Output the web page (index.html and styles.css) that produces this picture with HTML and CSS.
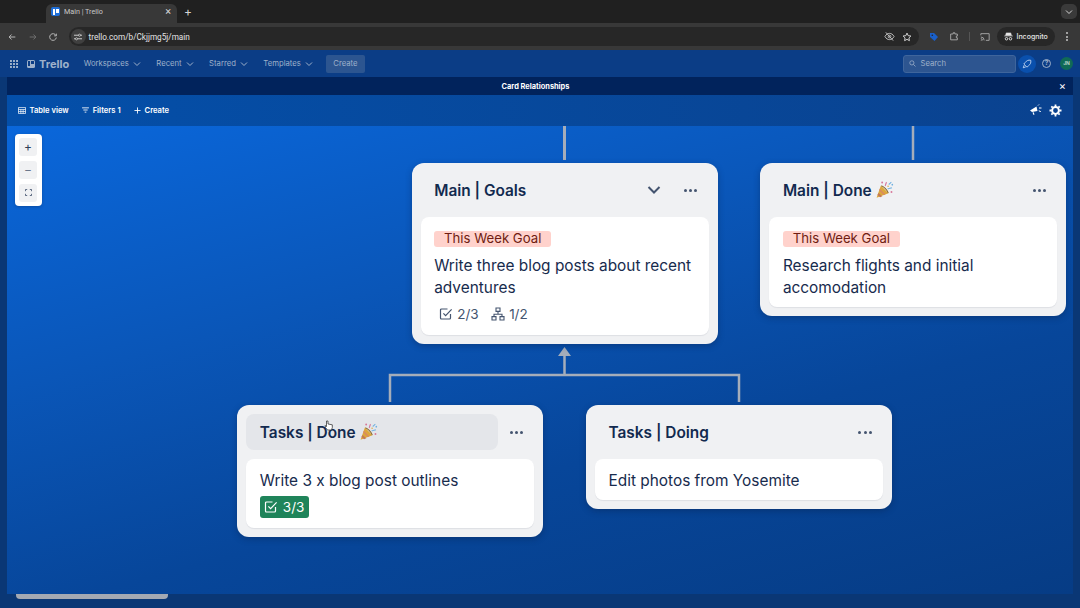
FILE: index.html
```html
<!DOCTYPE html>
<html lang="en">
<head>
    <meta charset="UTF-8">
    <title>Main | Trello</title>
    <link rel="stylesheet" href="styles.css">
</head>
<body>
    <svg class="defs" width="0" height="0">
        <symbol id="popper" viewBox="0 0 18 18">
            <path d="M1.5 16.8 5.6 5.2l7.2 7.3z" fill="#dca83c"/>
            <path d="M3.2 12.2 7 15.4l-2.2.9-2.5-2z" fill="#c47a55"/>
            <path d="M4.6 8.2l5.3 5.5-1.5.6-4.6-4.6z" fill="#d98a62"/>
            <path d="M6 5.5c2 .5 5.6 4 6.6 6.8" fill="none" stroke="#8a6a30" stroke-width="1"/>
            <path d="M9.6 5.5c.8-1.2.4-2.4 1.4-3.400" fill="none" stroke="#d8779a" stroke-width="1.1"/>
            <path d="M12 8.6c1.4-1 2.6-.6 4-1.300" fill="none" stroke="#6fb0e0" stroke-width="1.1"/>
            <path d="M13 4.200c1-.5 1.500-1.500 2.500-2" fill="none" stroke="#6fb0e0" stroke-width="1"/>
            <circle cx="6.800" cy="2.400" r=".9" fill="#d8779a"/>
            <circle cx="16.400" cy="4.400" r=".8" fill="#6fb0e0"/>
            <circle cx="15.600" cy="11.400" r=".9" fill="#d8779a"/>
            <circle cx="12.400" cy="6" r=".7" fill="#dca83c"/>
        </symbol>
        <symbol id="check" viewBox="0 0 14 14">
            <path d="M11.500 7v4a1 1 0 0 1-1 1h-8a1 1 0 0 1-1-1V3a1 1 0 0 1 1-1h6" fill="none" stroke="currentColor" stroke-width="1.2"/>
            <path d="M4.400 6.400 6.600 8.600 12.600 2.400" fill="none" stroke="currentColor" stroke-width="1.2"/>
        </symbol>
        <symbol id="tree" viewBox="0 0 14 14">
            <path d="M5 1h4v3.400H5zM1 9.600h4V13H1zM9 9.600h4V13H9zM7 4.400v2.800M3 9.600V7.200h8v2.400" fill="none" stroke="currentColor" stroke-width="1.1"/>
        </symbol>
        <symbol id="chev" viewBox="0 0 10 10">
            <path d="M2 3.500 5 6.500 8 3.500" fill="none" stroke="currentColor" stroke-width="1"/>
        </symbol>
    </svg>

    <div class="tabbar">
        <div class="tab">
            <span class="favicon"><i></i><i></i></span>
            <span class="tab-title">Main | Trello</span>
            <span class="tab-close">×</span>
        </div>
        <span class="tab-new">+</span>
        <span class="tab-menu"><svg width="10" height="10"><use href="#chev"/></svg></span>
    </div>

    <div class="toolbar">
        <svg class="nav-btn" width="10" height="10" viewBox="0 0 12 12"><path d="M10 6H2.500M5.500 3 2.500 6l3 3" fill="none" stroke="#b5b5b5" stroke-width="1.200"/></svg>
        <svg class="nav-btn" width="10" height="10" viewBox="0 0 12 12"><path d="M2 6h7.500M6.500 3l3 3-3 3" fill="none" stroke="#6e6e6e" stroke-width="1.200"/></svg>
        <svg class="nav-btn" width="10" height="10" viewBox="0 0 12 12"><path d="M9.600 4.200A4 4 0 1 0 10 6.600M10 2v2.600H7.400" fill="none" stroke="#b5b5b5" stroke-width="1.200"/></svg>
        <div class="omnibox">
            <span class="site-info"><svg width="8" height="8" viewBox="0 0 9 9"><path d="M0 2.500h5M7.500 2.500H9M0 6.500h1.500M4 6.500h5" stroke="#ddd" fill="none"/><circle cx="6.200" cy="2.500" r="1.200" fill="none" stroke="#ddd" stroke-width=".8"/><circle cx="2.800" cy="6.500" r="1.200" fill="none" stroke="#ddd" stroke-width=".8"/></svg></span>
            <span class="url">trello.com/b/Ckjjmg5j/main</span>
            <svg class="omni-right" width="11" height="11" viewBox="0 0 12 12"><path d="M1 6c1.400-2.400 3-3.400 5-3.400S9.600 3.600 11 6c-1.400 2.400-3 3.400-5 3.400S2.400 8.400 1 6z" fill="none" stroke="#c4c4c4"/><circle cx="6" cy="6" r="1.500" fill="none" stroke="#c4c4c4"/><path d="M2 1.500 10 10.500" stroke="#c4c4c4"/></svg>
            <svg class="omni-right" width="10" height="10" viewBox="0 0 12 12"><path d="M6 1.300 7.400 4.400l3.300.4-2.400 2.300.6 3.300L6 8.800l-2.900 1.600.6-3.300L1.300 4.800l3.300-.4z" fill="none" stroke="#d0d0d0" stroke-width="1.200"/></svg>
        </div>
        <svg class="ext" width="10" height="10" viewBox="0 0 10 10"><path d="M1 1h4l4 4-3.500 4L1 5z" fill="#1a5fc8"/><circle cx="3.300" cy="3.300" r=".8" fill="#222"/></svg>
        <svg class="ext" width="10" height="11" viewBox="0 0 12 12"><path d="M2 3h3V1.500h2V3h3v2.500H8.800v2H10V10H2z" fill="none" stroke="#b5b5b5"/></svg>
        <span class="tool-sep"></span>
        <svg class="ext" width="10" height="10" viewBox="0 0 12 12"><path d="M1 4V2h10v8H7M1 10h1M1 8a2 2 0 0 1 2 2M1 6a4 4 0 0 1 4 4" fill="none" stroke="#b5b5b5"/></svg>
        <span class="incognito">
            <svg width="9" height="9" viewBox="0 0 10 10"><path d="M2.500 1h5l.8 3H1.700zM0 4.400h10" fill="#e5e5e5" stroke="#e5e5e5" stroke-width=".6"/><circle cx="2.800" cy="7.500" r="1.400" fill="none" stroke="#e5e5e5"/><circle cx="7.200" cy="7.500" r="1.400" fill="none" stroke="#e5e5e5"/></svg>
            Incognito
        </span>
        <span class="kebab"><i></i><i></i><i></i></span>
    </div>

    <div class="appnav">
        <svg class="apps" width="8" height="8" viewBox="0 0 10 10"><path d="M0 0h2.400v2.400H0zM3.800 0h2.400v2.400H3.800zM7.600 0H10v2.400H7.600zM0 3.800h2.400v2.400H0zM3.800 3.800h2.400v2.400H3.800zM7.600 3.800H10v2.400H7.600zM0 7.600h2.400V10H0zM3.800 7.600h2.400V10H3.800zM7.600 7.600H10V10H7.600z" fill="#9fb1ca"/></svg>
        <span class="logo"><span class="logo-mark"><i></i><i></i></span>Trello</span>
        <span class="menu">Workspaces <svg width="10" height="10"><use href="#chev"/></svg></span>
        <span class="menu">Recent <svg width="10" height="10"><use href="#chev"/></svg></span>
        <span class="menu">Starred <svg width="10" height="10"><use href="#chev"/></svg></span>
        <span class="menu">Templates <svg width="10" height="10"><use href="#chev"/></svg></span>
        <span class="create">Create</span>
        <span class="search">
            <svg width="7" height="7" viewBox="0 0 9 9"><circle cx="3.700" cy="3.700" r="2.700" fill="none" stroke="#9fb1ca"/><path d="M5.700 5.700 8.300 8.300" stroke="#9fb1ca"/></svg>
            Search
        </span>
        <span class="bell"><svg width="10" height="10" viewBox="0 0 12 12"><path d="M10.500 1.500c-3-.6-5 .6-6.500 2.500L2.200 6l3.800 3.800 2-1.800c1.900-1.500 3.100-3.500 2.500-6.500zM2.500 7.500 1.500 10.500l3-1" fill="none" stroke="#cfe0f7" stroke-width="1"/></svg></span>
        <span class="help">?</span>
        <span class="avatar">JN</span>
    </div>

    <div class="overlay">
        <div class="modal">
            <div class="modal-title">
                <span>Card Relationships</span>
                <span class="modal-close">×</span>
            </div>
            <div class="modal-tools">
                <span class="tool"><svg width="8" height="7" viewBox="0 0 9 8"><path d="M.5.500h8v7h-8zM.5 2.800h8M.5 5.200h8M3.200 2.800v4.700M5.800 2.800v4.700" fill="none" stroke="#fff" stroke-width=".8"/></svg>Table view</span>
                <span class="tool"><svg width="7" height="6" viewBox="0 0 8 7"><path d="M0 1h8M1.500 3.500h5M3 6h2" stroke="#fff"/></svg>Filters 1</span>
                <span class="tool"><svg width="7" height="7" viewBox="0 0 8 8"><path d="M4 .500v7M.500 4h7" stroke="#fff"/></svg>Create</span>
                <span class="tools-right">
                    <svg width="13" height="12" viewBox="0 0 13 12"><path d="M1 6.500 7.500 2.500l1 4.500-5.500 1z" fill="#fff"/><path d="M3.500 8.500 4.500 11l1-.4-.8-2.300z" fill="#fff"/><path d="M9 1.500 10 .500M10 4h2.500M9.800 6.800l2 .8" stroke="#fff" stroke-width="1"/></svg>
                    <svg width="13" height="13" viewBox="0 0 13 13"><circle cx="6.500" cy="6.500" r="3.400" fill="none" stroke="#fff" stroke-width="2"/><path d="M6.500.500v2M6.500 10.500v2M.500 6.500h2M10.500 6.500h2M2.300 2.300l1.400 1.400M9.300 9.300l1.400 1.400M2.300 10.700l1.400-1.400M9.300 3.700l1.400-1.400" stroke="#fff" stroke-width="1.800"/></svg>
                </span>
            </div>
            <div class="canvas">
                <svg class="links" width="1066" height="468" viewBox="0 0 1066 468">
                    <path d="M557.500 0v34" fill="none" stroke="#a5adba" stroke-width="3"/>
                    <path d="M906 0v34" fill="none" stroke="#a5adba" stroke-width="2.500"/>
                    <path d="M557.500 226V249M383 276V249H732V276" fill="none" stroke="#a5adba" stroke-width="2.500"/>
                    <path d="M557.500 221 564 230H551z" fill="#a5adba"/>
                </svg>

                <div class="zoom-panel">
                    <span class="zoom-btn">+</span>
                    <span class="zoom-btn muted">−</span>
                    <span class="zoom-btn"><svg width="7" height="7" viewBox="0 0 8 8"><path d="M.500 2.500v-2h2M5.500.500h2v2M7.500 5.500v2h-2M2.500 7.500h-2v-2" fill="none" stroke="#44546f" stroke-width="1"/></svg></span>
                </div>

                <div class="node node-goals">
                    <div class="node-head">
                        <span class="node-title">Main | Goals</span>
                        <svg class="node-chev" width="18" height="18" viewBox="0 0 18 18"><path d="M3.500 6 9 11.500 14.500 6" fill="none" stroke="#44546f" stroke-width="2"/></svg>
                        <span class="dots"><i></i><i></i><i></i></span>
                    </div>
                    <div class="card">
                        <span class="label">This Week Goal</span>
                        <div class="card-name">Write three blog posts about recent adventures</div>
                        <div class="badges">
                            <span class="badge"><svg width="14" height="14"><use href="#check"/></svg>2/3</span>
                            <span class="badge"><svg width="14" height="14"><use href="#tree"/></svg>1/2</span>
                        </div>
                    </div>
                </div>

                <div class="node node-main-done">
                    <div class="node-head">
                        <span class="node-title">Main | Done <svg class="popper" width="19" height="19"><use href="#popper"/></svg></span>
                        <span class="dots"><i></i><i></i><i></i></span>
                    </div>
                    <div class="card">
                        <span class="label">This Week Goal</span>
                        <div class="card-name">Research flights and initial accomodation</div>
                    </div>
                </div>

                <div class="node node-tasks-done">
                    <div class="node-head">
                        <span class="node-title hovered">Tasks | Done <svg class="popper" width="19" height="19"><use href="#popper"/></svg></span>
                        <span class="dots"><i></i><i></i><i></i></span>
                    </div>
                    <div class="card">
                        <div class="card-name">Write 3 x blog post outlines</div>
                        <div class="badges">
                            <span class="badge done"><svg width="14" height="14"><use href="#check"/></svg>3/3</span>
                        </div>
                    </div>
                </div>

                <div class="node node-doing">
                    <div class="node-head">
                        <span class="node-title">Tasks | Doing</span>
                        <span class="dots"><i></i><i></i><i></i></span>
                    </div>
                    <div class="card">
                        <div class="card-name">Edit photos from Yosemite</div>
                    </div>
                </div>

                <svg class="cursor" width="9" height="11" viewBox="0 0 9 11"><path d="M2.500 1v5.500L1 5.500l.5 2L3.500 10h4l.8-2.500V4.800L4 4V1z" fill="#fff" stroke="#222" stroke-width=".7"/></svg>
            </div>
        </div>
        <div class="hscroll"><span class="hscroll-thumb"></span></div>
    </div>
</body>
</html>
```

FILE: styles.css
```css
* {
    box-sizing: border-box;
}

html, body {
    margin: 0;
    height: 608px;
    overflow: hidden;
}

body {
    font-family: Inter, "Liberation Sans", sans-serif;
    display: flex;
    flex-direction: column;
    background: #0a3473;
}

.defs {
    position: absolute;
}

/* browser chrome */
.tabbar {
    height: 23px;
    flex: none;
    background: #202020;
    display: flex;
    align-items: flex-end;
    padding-left: 46px;
    color: #d5d5d5;
}

.tab {
    width: 131px;
    height: 19px;
    background: #383838;
    border-radius: 6px 6px 0 0;
    display: flex;
    align-items: center;
    padding: 0 6px 4px 5px;
    font-family: Roboto, sans-serif;
    font-size: 7.200px;
}

.favicon {
    width: 9px;
    height: 9px;
    border-radius: 2px;
    background: #1f6fd8;
    display: flex;
    gap: 1px;
    padding: 1.500px;
    margin-right: 4px;
}

.favicon i {
    width: 2.500px;
    height: 6px;
    background: #fff;
}

.favicon i + i {
    height: 4px;
}

.tab-title {
    flex: 1;
    color: #c9c9c9;
}

.tab-close {
    font-size: 11px;
    line-height: 1;
}

.tab-new {
    font-size: 12px;
    line-height: 15px;
    margin-left: 7px;
    height: 19px;
}

.tab-menu {
    margin: 0 3px 4px auto;
    width: 16px;
    height: 15px;
    border-radius: 5px;
    background: #3a3a3a;
    display: flex;
    align-items: center;
    justify-content: center;
}

.toolbar {
    height: 27px;
    flex: none;
    background: #383838;
    display: flex;
    align-items: center;
    padding: 0 6px 0 7px;
    color: #c7c7c7;
}

.nav-btn {
    margin-right: 10.500px;
}

.omnibox {
    width: 850px;
    height: 19px;
    background: #272727;
    border-radius: 10px;
    display: flex;
    align-items: center;
    padding: 0 7px 0 2px;
    gap: 7px;
}

.site-info {
    width: 15px;
    height: 15px;
    border-radius: 50%;
    background: #3f3f3f;
    display: flex;
    align-items: center;
    justify-content: center;
    margin-right: -4px;
}

.url {
    flex: 1;
    font-family: Roboto, sans-serif;
    font-size: 8.200px;
    color: #e3e3e3;
}

.ext {
    margin-left: 10px;
}

.tool-sep {
    width: 1px;
    height: 9px;
    margin-left: 10px;
    background: #555;
}

.incognito {
    height: 19px;
    margin-left: 7px;
    padding: 0 7px;
    border-radius: 10px;
    background: #272727;
    display: flex;
    align-items: center;
    gap: 4px;
    font-size: 7px;
    font-weight: 500;
    color: #e5e5e5;
}

.kebab {
    margin-left: 11px;
    display: flex;
    flex-direction: column;
    gap: 1.500px;
}

.kebab i {
    width: 2px;
    height: 2px;
    border-radius: 50%;
    background: #c4c4c4;
}

/* trello nav, dimmed behind the modal */
.appnav {
    height: 27px;
    flex: none;
    background: #0b3d86;
    display: flex;
    align-items: center;
    padding: 0 7px 0 9.500px;
    color: #9fb1ca;
    font-size: 7.700px;
}

.logo {
    display: flex;
    align-items: center;
    gap: 4px;
    margin-left: 9.500px;
    font-size: 11px;
    font-weight: 700;
}

.logo-mark {
    width: 8px;
    height: 8px;
    background: #9fb1ca;
    border-radius: 1.500px;
    display: flex;
    gap: 1px;
    padding: 1.200px;
}

.logo-mark i {
    width: 2.300px;
    height: 5.500px;
    background: #0b3d86;
}

.logo-mark i + i {
    height: 3.500px;
}

.menu {
    display: flex;
    align-items: center;
    gap: 3px;
    margin-left: 14.500px;
}

.create {
    height: 18px;
    margin-left: 12.500px;
    padding: 0 7px;
    border-radius: 2px;
    background: #2c5590;
    display: flex;
    align-items: center;
}

.search {
    width: 113px;
    height: 18px;
    margin-left: auto;
    padding: 0 5px;
    border-radius: 3px;
    background: #2d5590;
    border: 1px solid #3f659c;
    display: flex;
    align-items: center;
    gap: 5px;
}

.bell {
    width: 18px;
    height: 18px;
    margin-left: 2px;
    border-radius: 50%;
    background: #0a50ad;
    display: flex;
    align-items: center;
    justify-content: center;
}

.help {
    width: 9px;
    height: 9px;
    margin-left: 6.500px;
    border: 1px solid #9fb1ca;
    border-radius: 50%;
    font-size: 6.500px;
    font-weight: 700;
    line-height: 7px;
    text-align: center;
}

.avatar {
    width: 13px;
    height: 13px;
    margin-left: 9px;
    border-radius: 50%;
    background: #106a56;
    font-size: 5px;
    font-weight: 700;
    line-height: 13px;
    text-align: center;
    color: #b8cfc8;
}

/* modal */
.overlay {
    flex: 1;
    display: flex;
    flex-direction: column;
    padding: 0 7px;
    background: #0a3775;
    position: relative;
}

.modal {
    height: 517px;
    flex: none;
    display: flex;
    flex-direction: column;
    overflow: hidden;
}

.modal-title {
    height: 18px;
    flex: none;
    background: #01235c;
    color: #fff;
    font-size: 7.400px;
    font-weight: 700;
    display: flex;
    align-items: center;
    justify-content: center;
    padding-right: 9px;
    position: relative;
}

.modal-close {
    position: absolute;
    right: 7px;
    top: 2px;
    font-size: 11px;
    font-weight: 400;
    line-height: 14px;
}

.modal-tools {
    height: 31px;
    flex: none;
    background: linear-gradient(90deg, #044fa9, #0a428f);
    color: #fff;
    font-size: 7.600px;
    font-weight: 600;
    display: flex;
    align-items: center;
    padding: 0 11px 1px 11px;
    gap: 13.500px;
}

.tool {
    display: flex;
    align-items: center;
    gap: 3.500px;
}

.tools-right {
    margin-left: auto;
    display: flex;
    align-items: center;
    gap: 7px;
}

.canvas {
    flex: 1;
    position: relative;
    overflow: hidden;
    background: linear-gradient(165deg, #0a67db 0%, #0a56b8 35%, #07469a 65%, #063c85 100%);
}

.links {
    position: absolute;
    left: 0;
    top: 0;
}

.zoom-panel {
    position: absolute;
    left: 8px;
    top: 8px;
    width: 27px;
    height: 72px;
    padding: 4px;
    background: #fff;
    border-radius: 4px;
    display: flex;
    flex-direction: column;
    gap: 5px;
    box-shadow: 0 1px 3px rgba(9, 30, 66, 0.3);
}

.zoom-btn {
    width: 18px;
    height: 18px;
    padding-bottom: 1px;
    border-radius: 3px;
    background: #f0f1f3;
    color: #2f3d57;
    font-size: 12px;
    line-height: 16px;
    display: flex;
    align-items: center;
    justify-content: center;
}

.zoom-btn.muted {
    color: #6b778c;
}

/* nodes sit on a free canvas */
.node {
    position: absolute;
    width: 306px;
    padding: 9px;
    background: #f0f1f3;
    border-radius: 12px;
    box-shadow: 0 2px 6px rgba(9, 30, 66, 0.35);
    color: #172b4d;
}

.node-goals {
    left: 404.700px;
    top: 37.300px;
}

.node-main-done {
    left: 753.400px;
    top: 37.300px;
}

.node-tasks-done {
    left: 230.300px;
    top: 279.300px;
}

.node-doing {
    left: 579px;
    top: 279.300px;
}

.node-head {
    height: 36px;
    margin-bottom: 9px;
    display: flex;
    align-items: center;
}

.node-title {
    flex: 1;
    align-self: stretch;
    padding-left: 13.500px;
    border-radius: 8px;
    display: flex;
    align-items: center;
    gap: 3px;
    font-size: 15.400px;
    font-weight: 600;
    color: #122a4f;
}

.node-title.hovered {
    background: #e4e6ea;
}

.popper {
    margin-top: -2px;
}

.node-chev {
    margin-right: 9.500px;
}

.dots {
    width: 36px;
    display: flex;
    justify-content: center;
    gap: 2.200px;
}

.dots i {
    width: 3px;
    height: 3px;
    border-radius: 50%;
    background: #44546f;
}

.card {
    background: #fff;
    border-radius: 8px;
    padding: 10px 13.500px 9px;
    box-shadow: 0 1px 1px rgba(9, 30, 66, 0.08);
}

.label {
    display: block;
    width: 117px;
    height: 16px;
    margin: 4px 0 7px;
    border-radius: 3px;
    background: #ffd2cc;
    color: #6f1d12;
    font-size: 13.200px;
    line-height: 15px;
    text-align: center;
}

.card-name {
    padding-top: 1px;
    margin-bottom: -1px;
    font-size: 15.400px;
    line-height: 22px;
    color: #172b4d;
}

.badges {
    display: flex;
    gap: 3px;
    margin: 5px 0 1px;
}

.badge {
    height: 22px;
    padding: 0 4.500px;
    display: flex;
    align-items: center;
    gap: 4.500px;
    font-size: 13.500px;
    color: #44546f;
    border-radius: 3px;
}

.badge.done {
    background: #1f845a;
    color: #fff;
}

.cursor {
    position: absolute;
    left: 317px;
    top: 294px;
}

.hscroll {
    height: 5px;
    margin-left: 9px;
}

.hscroll-thumb {
    display: block;
    width: 152px;
    height: 5px;
    background: #a3a9b3;
    border-radius: 0 0 4px 4px;
}
```
